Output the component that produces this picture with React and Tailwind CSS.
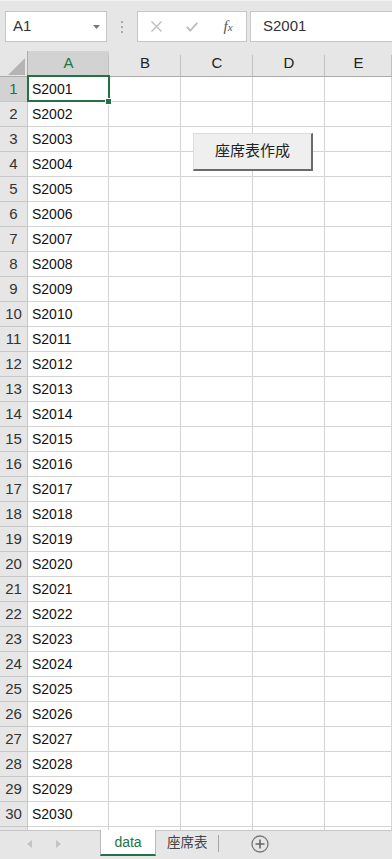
import React from "react";

const FONT = { fontFamily: '"Liberation Sans", "Noto Sans CJK JP", sans-serif' };
const cols = ["A", "B", "C", "D", "E"];
const widths = ["w-[81px]", "w-[72px]", "w-[72px]", "w-[72px]", "flex-1"];

function Row({ n }) {
  const sel = n === 1;
  return (
    <div className="flex h-[25px] shrink-0">
      <div
        className={`w-[28px] shrink-0 border-r border-b border-[#c8c8c8] flex items-center justify-center text-[15px] ${
          sel ? "bg-[#d2d2d2] text-[#217346]" : "bg-[#e6e6e6] text-[#333]"
        }`}
      >
        {n}
      </div>
      {widths.map((w, i) => (
        <div
          key={i}
          className={`${w} shrink-0 border-r border-b border-[#d4d4d4] flex items-center pl-[4px] text-[14px] text-[#111]`}
        >
          {i === 0 ? `S${2000 + n}` : ""}
        </div>
      ))}
    </div>
  );
}

export default function App() {
  const rows = Array.from({ length: 31 }, (_, i) => i + 1);
  return (
    <div className="w-[392px] h-[859px] flex flex-col overflow-hidden bg-white" style={FONT}>
      {/* toolbar */}
      <div className="h-[51px] shrink-0 bg-[#e6e6e6] border-t border-[#f2f2f2] flex items-start pt-[10px]">
        <div className="ml-[5px] w-[102px] h-[31px] border border-[#c6c6c6] bg-white flex items-center pl-[7px] shrink-0">
          <span className="text-[15px] text-[#333]">A1</span>
          <svg className="ml-auto mr-[6px]" width="7" height="4" viewBox="0 0 7 4">
            <path d="M0 0 L7 0 L3.5 4 Z" fill="#777" />
          </svg>
        </div>
        <div className="w-[30px] h-[31px] shrink-0 flex flex-col items-center justify-center gap-[3px]">
          <div className="w-[2px] h-[2px] bg-[#aaa]" />
          <div className="w-[2px] h-[2px] bg-[#aaa]" />
          <div className="w-[2px] h-[2px] bg-[#aaa]" />
        </div>
        <div className="w-[110px] h-[31px] shrink-0 border border-[#c6c6c6] bg-white flex items-center">
          <div className="w-[36px] flex justify-center">
            <svg width="11" height="11" viewBox="0 0 11 11">
              <path d="M0.5 0.5 L10.5 10.5 M10.5 0.5 L0.5 10.5" stroke="#bdbdbd" strokeWidth="1.4" />
            </svg>
          </div>
          <div className="w-[36px] flex justify-center">
            <svg width="12" height="10" viewBox="0 0 12 10">
              <path d="M0.8 5 L4.3 8.6 L11.3 0.8" stroke="#bdbdbd" strokeWidth="1.8" fill="none" />
            </svg>
          </div>
          <div className="w-[36px] flex justify-center">
            <span
              className="italic text-[#555] text-[15px] leading-none"
              style={{ fontFamily: '"Liberation Serif", serif' }}
            >
              f<span className="text-[11px]">x</span>
            </span>
          </div>
        </div>
        <div className="ml-[3px] flex-1 h-[31px] border border-r-0 border-[#c6c6c6] bg-white flex items-center pl-[12px]">
          <span className="text-[15px] text-[#333]">S2001</span>
        </div>
      </div>

      {/* grid */}
      <div className="flex-1 overflow-hidden relative">
        <div className="flex h-[26px] shrink-0 bg-[#e6e6e6]">
          <div className="w-[28px] shrink-0 border-r border-b border-[#ababab] relative flex items-end justify-end pb-[1px] pr-[2px]">
            <svg width="17" height="17" viewBox="0 0 17 17">
              <path d="M17 0 L17 17 L0 17 Z" fill="#b5b5b5" />
            </svg>
          </div>
          {cols.map((c, i) => (
            <div
              key={c}
              className={`${widths[i]} shrink-0 border-b border-[#ababab] flex items-center justify-center text-[15px] relative ${
                i === 0 ? "bg-[#d2d2d2] text-[#217346]" : "text-[#222]"
              }`}
            >
              {c}
              <div className="absolute right-0 top-[4px] bottom-0 w-px bg-[#c0c0c0]" />
            </div>
          ))}
        </div>
        {rows.map((n) => (
          <Row key={n} n={n} />
        ))}

        {/* selection */}
        <div className="absolute left-[27px] top-[24px] w-[83px] h-[27px] border-2 border-[#217346] pointer-events-none" />
        <div className="absolute left-[105px] top-[47px] w-[7px] h-[7px] bg-[#217346] border border-white" />

        {/* button shape */}
        <div className="absolute left-[193px] top-[82px] w-[120px] h-[38px] bg-[#efefef] border-l border-t border-[#dcdcdc] border-r-2 border-b-2 border-r-[#6a6a6a] border-b-[#6a6a6a] flex items-center justify-center text-[15px] text-[#222]">
          座席表作成
        </div>
      </div>

      {/* tab bar */}
      <div className="h-[29px] shrink-0 bg-[#e6e6e6] border-t border-[#c6c6c6] flex items-start">
        <div className="w-[100px] h-[25px] shrink-0 flex items-center">
          <svg className="ml-[27px]" width="5" height="8" viewBox="0 0 5 8">
            <path d="M5 0 L5 8 L0 4 Z" fill="#c4c4c4" />
          </svg>
          <svg className="ml-[24px]" width="5" height="8" viewBox="0 0 5 8">
            <path d="M0 0 L0 8 L5 4 Z" fill="#c4c4c4" />
          </svg>
        </div>
        <div className="-mt-px w-[56px] h-[26px] shrink-0 bg-white border-x border-[#b8b8b8] border-b-2 border-b-[#217346] flex items-center justify-center text-[14px] text-[#217346]">
          data
        </div>
        <div className="h-[25px] pl-[11px] pr-[10px] flex items-center text-[13.5px] text-[#444]">座席表</div>
        <div className="mt-[4px] w-px h-[17px] bg-[#a6a6a6]" />
        <div className="ml-[32px] h-[25px] flex items-center">
          <svg width="18" height="18" viewBox="0 0 18 18">
            <circle cx="9" cy="9" r="8" fill="none" stroke="#777" strokeWidth="1.3" />
            <path d="M9 4.5 V13.5 M4.5 9 H13.5" stroke="#666" strokeWidth="1.6" />
          </svg>
        </div>
      </div>
    </div>
  );
}
